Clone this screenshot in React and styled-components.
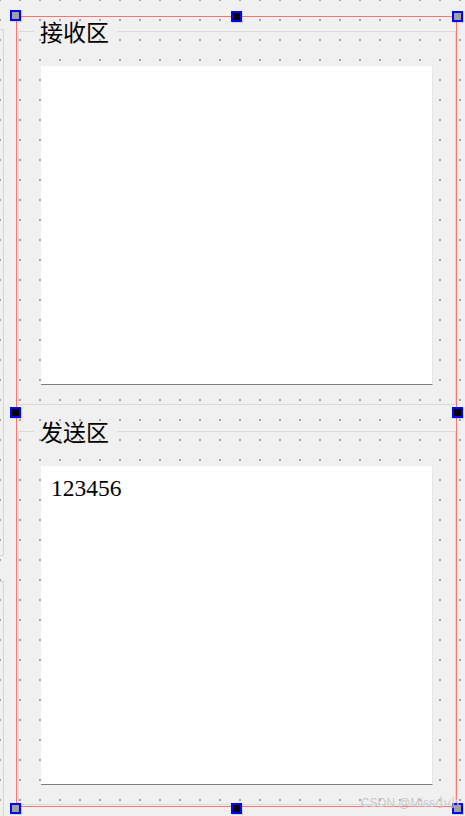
import React from "react";
import styled, { createGlobalStyle } from "styled-components";

const Global = createGlobalStyle`
  html, body { margin: 0; padding: 0; }
  body {
    width: 465px;
    height: 816px;
    overflow: hidden;
    background-color: #f0f0f0;
    background-image: conic-gradient(at 2px 2px, transparent 75%, #a3a3a3 0);
    background-size: 20px 20px;
    background-position: 19px 19px;
    font-family: "Liberation Sans", "Noto Sans CJK SC", sans-serif;
  }
`;

const Canvas = styled.div`
  position: relative;
  display: flex;
  align-items: flex-start;
  width: 465px;
  height: 816px;
`;

const NeighborColumn = styled.div`
  display: flex;
  flex-direction: column;
  gap: 25px;
  width: 4px;
  padding-top: 29px;
  flex-shrink: 0;
`;

const NeighborBox = styled.div`
  box-sizing: border-box;
  width: 4px;
  height: ${(p) => p.$h}px;
  border-top: 1px solid #d6d6d6;
  border-right: 1px solid #d6d6d6;
  border-bottom: ${(p) => (p.$open ? "none" : "1px solid #d6d6d6")};
`;

const Selection = styled.div`
  position: relative;
  box-sizing: border-box;
  margin-left: 12px;
  margin-top: 16px;
  width: 441px;
  height: 791px;
  border: 1px solid #ff7474;
  padding: 1px 0 0 1px;
  display: flex;
  flex-direction: column;
  gap: 13px;
`;

const Handle = styled.div`
  position: absolute;
  box-sizing: border-box;
  width: 11px;
  height: 11px;
  border: 2px solid #0000ff;
  background: ${(p) => (p.$corner ? "#a0a0a0" : "#000")};
  box-shadow: 1px 1px 0 rgba(0, 0, 0, 0.12);
  left: ${(p) =>
    p.$h === "start" ? "-7px" : p.$h === "mid" ? "calc(50% - 6px)" : "calc(100% - 4px)"};
  top: ${(p) =>
    p.$v === "start"
      ? p.$h === "start"
        ? "-7px"
        : "-6px"
      : p.$v === "mid"
      ? "calc(50% - 4.5px)"
      : "calc(100% - 3px)"};
`;

const GroupBox = styled.fieldset`
  box-sizing: border-box;
  margin: 0;
  min-width: 0;
  width: 438px;
  padding: 0 0 19px 0;
  border: 1px solid #dadada;
`;

const Title = styled.legend`
  margin-left: 15px;
  padding: 0 8px 0 6px;
  font-family: "Noto Sans CJK SC", "Liberation Sans", sans-serif;
  font-size: 23px;
  line-height: 26px;
  color: #000;
`;

const TextArea = styled.div`
  box-sizing: border-box;
  margin: 22px 0 0 22px;
  width: 392px;
  height: 319px;
  background: #fff;
  border-bottom: 1px solid #7f7f7f;
  border-right: 1px solid #e6e6e6;
  padding: 8px 10px;
  font-family: "Liberation Serif", "Noto Sans CJK SC", serif;
  font-size: 23.5px;
  line-height: 28px;
  color: #000;
`;

const Watermark = styled.div`
  position: absolute;
  right: 6px;
  bottom: 6px;
  font-family: "Liberation Sans", "Noto Sans CJK SC", sans-serif;
  font-size: 12px;
  color: rgba(190, 190, 190, 0.9);
  text-shadow: 0 0 1px rgba(255, 255, 255, 0.7);
  pointer-events: none;
`;

const handles = [
  ["start", "start", true],
  ["mid", "start", false],
  ["end", "start", true],
  ["start", "mid", false],
  ["end", "mid", false],
  ["start", "end", true],
  ["mid", "end", false],
  ["end", "end", true],
];

export default function App() {
  return (
    <>
      <Global />
      <Canvas>
        <NeighborColumn>
          <NeighborBox $h={527} />
          <NeighborBox $h={240} $open />
        </NeighborColumn>
        <Selection>
          <GroupBox>
            <Title>接收区</Title>
            <TextArea />
          </GroupBox>
          <GroupBox>
            <Title>发送区</Title>
            <TextArea>123456</TextArea>
          </GroupBox>
          {handles.map(([h, v, c], i) => (
            <Handle key={i} $h={h} $v={v} $corner={c} />
          ))}
        </Selection>
        <Watermark>CSDN @Miss小小</Watermark>
      </Canvas>
    </>
  );
}
